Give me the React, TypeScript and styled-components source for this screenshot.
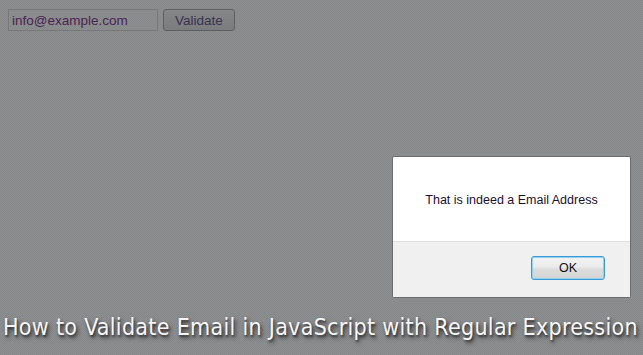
import React from "react";
import styled, { createGlobalStyle } from "styled-components";

const Global = createGlobalStyle`
  html, body { margin: 0; padding: 0; }
  body { width: 643px; height: 355px; overflow: hidden; }
`;

const Page = styled.div`
  position: relative;
  width: 643px;
  height: 355px;
  display: flex;
  flex-direction: column;
  background-color: #8a8b8d;
  background-image: repeating-conic-gradient(#8d8e90 0 25%, #87888a 0 50%);
  background-size: 2px 2px;
  font-family: "Liberation Sans", Arial, sans-serif;
`;

const FormRow = styled.div`
  display: flex;
  align-items: flex-start;
  gap: 4px;
  padding: 9px 8px 0;
`;

const EmailInput = styled.div`
  box-sizing: border-box;
  width: 150px;
  height: 22px;
  border: 1px solid #77787a;
  padding: 0 0 0 3px;
  display: flex;
  align-items: center;
  font-size: 13.5px;
  color: #4a2452;
`;

const Button = styled.div`
  box-sizing: border-box;
  width: 72px;
  height: 22px;
  border: 1px solid #5e5f61;
  border-radius: 3px;
  background: linear-gradient(#858688, #7b7c7e);
  display: flex;
  align-items: center;
  justify-content: center;
  font-size: 13.5px;
  color: #3a3350;
  margin-left: 1px;
`;

const Dialog = styled.div`
  position: absolute;
  left: 392px;
  top: 156px;
  box-sizing: border-box;
  width: 239px;
  height: 142px;
  border: 1px solid #6c6c6c;
  border-radius: 2px;
  background: #ffffff;
  display: flex;
  flex-direction: column;
  overflow: hidden;
`;

const Message = styled.div`
  height: 84px;
  display: flex;
  align-items: center;
  justify-content: center;
  font-size: 12.5px;
  color: #1b1030;
  padding-top: 1px;
  box-sizing: border-box;
`;

const Footer = styled.div`
  flex: 1;
  background: #f0f0f0;
  border-top: 1px solid #dfdfdf;
  display: flex;
  justify-content: flex-end;
  align-items: flex-start;
  padding: 14px 25px 0 0;
`;

const OkButton = styled.div`
  box-sizing: border-box;
  width: 74px;
  height: 24px;
  border: 1px solid #3b9ad6;
  box-shadow: inset 0 0 0 1px #8fd0f3;
  border-radius: 3px;
  background: linear-gradient(#f2f2f2 0%, #ebebeb 45%, #dcdcdc 55%, #d4d4d4 100%);
  display: flex;
  align-items: center;
  justify-content: center;
  font-size: 12.5px;
  color: #111;
`;

const Title = styled.div`
  margin-top: auto;
  padding: 0 0 15px 3px;
  font-family: "DejaVu Sans Condensed", "DejaVu Sans", sans-serif;
  font-stretch: condensed;
  font-size: 23px;
  letter-spacing: 0.3px;
  line-height: 26px;
  color: #f6f6f6;
  white-space: nowrap;
  text-shadow: 2px 3px 4px rgba(0, 0, 0, 0.6), 1px 2px 2px rgba(0, 0, 0, 0.4);
`;

export default function App() {
  return (
    <Page>
      <Global />
      <FormRow>
        <EmailInput>info@example.com</EmailInput>
        <Button>Validate</Button>
      </FormRow>
      <Dialog>
        <Message>That is indeed a Email Address</Message>
        <Footer>
          <OkButton>OK</OkButton>
        </Footer>
      </Dialog>
      <Title>How to Validate Email in JavaScript with Regular Expression</Title>
    </Page>
  );
}
